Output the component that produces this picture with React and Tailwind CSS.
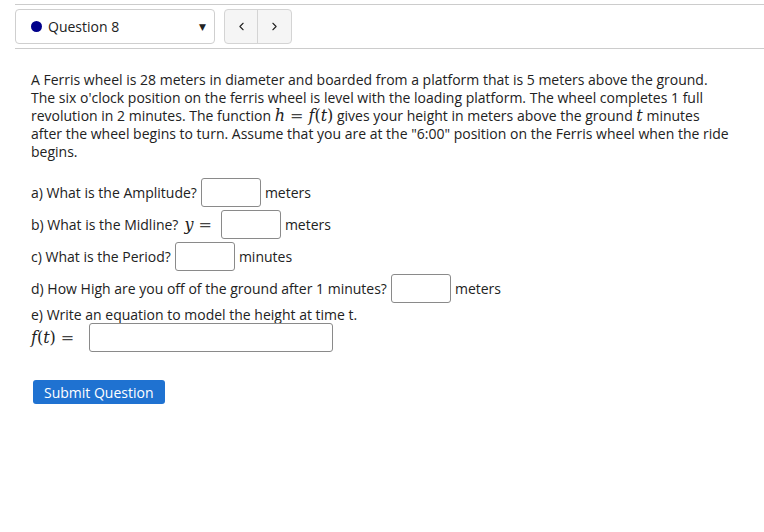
import React from "react";
import { ChevronLeft, ChevronRight } from "lucide-react";

const font = { fontFamily: '"Open Sans", "DejaVu Sans", sans-serif' };

const M = ({ children, italic = true }) => (
  <span className={`font-['DejaVu_Serif',serif] text-[16px] leading-[18px] ${italic ? "italic" : ""}`}>{children}</span>
);

const Eq = () => <span className="mx-[5px] font-['DejaVu_Serif',serif] text-[16px] leading-[18px] text-[#444]">=</span>;

const Ft = () => (
  <>
    <M>f</M>
    <M italic={false}>(</M>
    <M>t</M>
    <M italic={false}>)</M>
  </>
);

const Box = ({ w = "w-[60px]" }) => (
  <input
    type="text"
    className={`${w} h-[29px] shrink-0 rounded-[3px] border border-[#8a8a8a] bg-white mx-[4px]`}
  />
);

export default function App() {
  return (
    <div className="min-h-screen bg-white text-[14px] text-[#222]" style={font}>
      <div className="ml-[15px] mt-[4px] flex items-center border-y border-[#cccccc] py-[4px]">
        <div className="flex h-[35px] w-[200px] items-center rounded-[4px] border border-[#cfcfcf] bg-white pl-[15px] pr-[8px]">
          <span className="h-[11px] w-[11px] rounded-full bg-[#00008b]" />
          <span className="ml-[6px] flex-1 text-[14px] text-[#222]">Question 8</span>
          <span className="text-[9px] text-[#222]">▼</span>
        </div>
        <div className="ml-[9px] flex h-[35px] overflow-hidden rounded-[4px] border border-[#d4d4d4] bg-[#f5f5f5]">
          <button className="flex w-[33px] items-center justify-center border-r border-[#d4d4d4] text-[#222]">
            <ChevronLeft size={13} strokeWidth={2} />
          </button>
          <button className="flex w-[33px] items-center justify-center text-[#222]">
            <ChevronRight size={13} strokeWidth={2} />
          </button>
        </div>
      </div>

      <div className="pl-[31px] pt-[22px]">
        <p className="w-[720px] leading-[18px]">
          A Ferris wheel is 28 meters in diameter and boarded from a platform that is 5 meters above the ground.
          <br />
          The six o'clock position on the ferris wheel is level with the loading platform. The wheel completes 1 full
          <br />
          revolution in 2 minutes. The function <M>h</M>
          <Eq />
          <Ft /> gives your height in meters above the ground <M>t</M> minutes
          <br />
          after the wheel begins to turn. Assume that you are at the "6:00" position on the Ferris wheel when the ride
          <br />
          begins.
        </p>

        <div className="mt-[17px] flex flex-col">
          <div className="flex h-[29px] items-center">
            <span>a) What is the Amplitude?</span>
            <Box />
            <span>meters</span>
          </div>
          <div className="mt-[3px] flex h-[29px] items-center">
            <span>b) What is the Midline?</span>
            <span className="ml-[6px]"><M>y</M></span>
            <Eq />
            <Box />
            <span>meters</span>
          </div>
          <div className="mt-[3px] flex h-[29px] items-center">
            <span>c) What is the Period?</span>
            <Box />
            <span>minutes</span>
          </div>
          <div className="mt-[3px] flex h-[29px] items-center">
            <span>d) How High are you off of the ground after 1 minutes?</span>
            <Box />
            <span>meters</span>
          </div>
          <div className="mt-[3px] flex h-[17px] items-center">
            <span>e) Write an equation to model the height at time t.</span>
          </div>
          <div className="flex h-[29px] items-center">
            <Ft />
            <Eq />
            <span className="ml-[6px]"><Box w="w-[244px]" /></span>
          </div>
        </div>

        <button className="mt-[28px] ml-[2px] h-[24px] rounded-[3px] bg-[#1f72d1] px-[11px] text-[14px] text-white">
          Submit Question
        </button>
      </div>
    </div>
  );
}
